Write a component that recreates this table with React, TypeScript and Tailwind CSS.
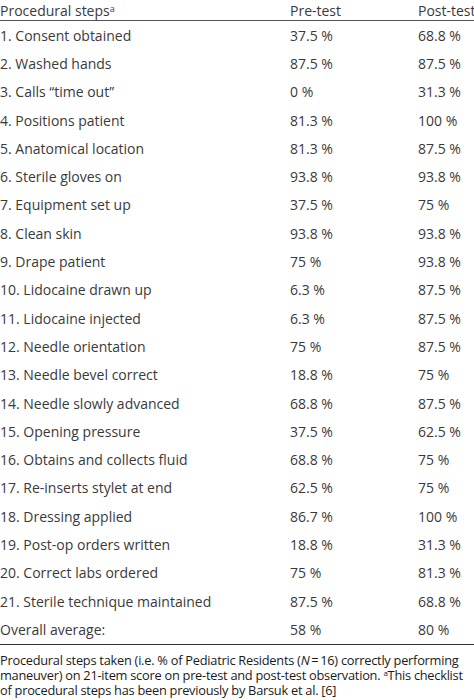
const rows: [string, string, string][] = [
  ["1. Consent obtained", "37.5 %", "68.8 %"],
  ["2. Washed hands", "87.5 %", "87.5 %"],
  ["3. Calls \u201ctime out\u201d", "0 %", "31.3 %"],
  ["4. Positions patient", "81.3 %", "100 %"],
  ["5. Anatomical location", "81.3 %", "87.5 %"],
  ["6. Sterile gloves on", "93.8 %", "93.8 %"],
  ["7. Equipment set up", "37.5 %", "75 %"],
  ["8. Clean skin", "93.8 %", "93.8 %"],
  ["9. Drape patient", "75 %", "93.8 %"],
  ["10. Lidocaine drawn up", "6.3 %", "87.5 %"],
  ["11. Lidocaine injected", "6.3 %", "87.5 %"],
  ["12. Needle orientation", "75 %", "87.5 %"],
  ["13. Needle bevel correct", "18.8 %", "75 %"],
  ["14. Needle slowly advanced", "68.8 %", "87.5 %"],
  ["15. Opening pressure", "37.5 %", "62.5 %"],
  ["16. Obtains and collects fluid", "68.8 %", "75 %"],
  ["17. Re-inserts stylet at end", "62.5 %", "75 %"],
  ["18. Dressing applied", "86.7 %", "100 %"],
  ["19. Post-op orders written", "18.8 %", "31.3 %"],
  ["20. Correct labs ordered", "75 %", "81.3 %"],
  ["21. Sterile technique maintained", "87.5 %", "68.8 %"],
  ["Overall average:", "58 %", "80 %"],
];

function Row({ cells }: { cells: [string, string, string] }) {
  return (
    <div className="grid h-[28.3px] grid-cols-[290px_128px_1fr] items-center">
      <span>{cells[0]}</span>
      <span>{cells[1]}</span>
      <span>{cells[2]}</span>
    </div>
  );
}

export default function App() {
  return (
    <div className="h-[700px] w-[474px] overflow-hidden bg-white font-['Open_Sans',sans-serif] text-[#3a3a3a]">
      <div className="text-[14px]">
        <div className="grid h-[21px] grid-cols-[290px_128px_1fr] items-center border-b border-[#555]">
          <span>
            Procedural steps<sup className="text-[9px]">a</sup>
          </span>
          <span>Pre-test</span>
          <span className="whitespace-nowrap">Post-test</span>
        </div>
        {rows.map((r) => (
          <Row key={r[0]} cells={r} />
        ))}
      </div>
      <div className="whitespace-nowrap border-t border-[#333] pt-[8px] text-[12.8px] font-medium leading-[15px] tracking-[-0.25px] text-[#1a1a1a]">
        Procedural steps taken (i.e. % of Pediatric Residents (<i>N</i>&thinsp;=&thinsp;16) correctly performing
        <br />
        maneuver) on 21-item score on pre-test and post-test observation. <sup className="text-[8px]">a</sup>This checklist
        <br />
        of procedural steps has been previously by Barsuk et al. [6]
      </div>
    </div>
  );
}
